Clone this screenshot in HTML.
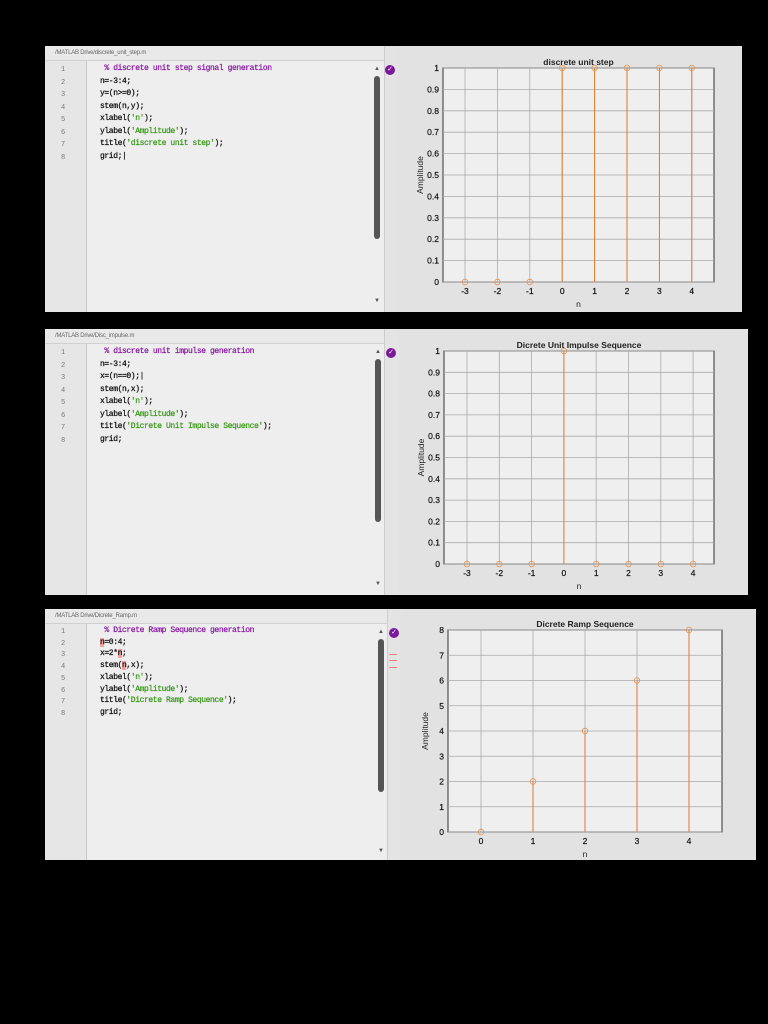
<!DOCTYPE html>
<html><head><meta charset="utf-8"><style>
body{margin:0;background:#000;width:768px;height:1024px;position:relative;overflow:hidden;font-family:"Liberation Sans",sans-serif}
.ed{position:absolute;background:#eeeeee}
.hdr{position:absolute;left:0;right:0;top:0;height:14px;background:#e9e9e9;border-bottom:1px solid #d0d0d0;font-size:6px;color:#666;line-height:14px;padding-left:10px;letter-spacing:-0.2px}
.gut{position:absolute;left:0;width:41px;bottom:0;background:#e6e6e6;border-right:1px solid #c8c8c8}
.ln{position:absolute;left:16px;font-family:"Liberation Mono",monospace;font-size:7px;color:#777}
.code{position:absolute;font-family:"Liberation Mono",monospace;font-size:8px;color:#111;white-space:pre;letter-spacing:-0.4px;-webkit-text-stroke:0.25px currentColor}
.c{color:#8b1aa6}.s{color:#3a9a1a}
.sb{position:absolute;width:6px;background:#555;border-radius:3px}
.strip{position:absolute;background:#e4e4e4;border-left:1px solid #ccc}
.chk{position:absolute;width:10px;height:10px;border-radius:50%;background:#7a1a9a;color:#fff;font-size:7px;line-height:10px;text-align:center}
.pl{position:absolute;background:#e2e2e2}
svg text{font-family:"Liberation Sans",sans-serif}
</style></head><body>

<div class="ed" style="left:45px;top:46px;width:340px;height:266px">
 <div class="hdr">/MATLAB Drive/discrete_unit_step.m</div>
 <div class="gut" style="top:15px"></div>
 <div class="ln" style="top:18px;line-height:12.5px">1<br>2<br>3<br>4<br>5<br>6<br>7<br>8</div>
 <div class="code" style="left:55px;top:17px;line-height:12.5px"> <span class="c">% discrete unit step signal generation</span>
n=-3:4;
y=(n&gt;=0);
stem(n,y);
xlabel(<span class="s">'n'</span>);
ylabel(<span class="s">'Amplitude'</span>);
title(<span class="s">'discrete unit step'</span>);
grid;|</div>
 <div class="sb" style="left:329px;top:30px;height:163px"></div>
 <div style="position:absolute;left:329px;top:20px;font-size:6px;color:#555">▲</div>
 <div style="position:absolute;left:329px;top:252px;font-size:6px;color:#555">▼</div>
</div>
<div class="strip" style="left:384px;top:46px;width:13px;height:266px"></div>
<div class="chk" style="left:385px;top:65px">✓</div>
<div class="pl" style="left:398px;top:46px;width:344px;height:266px"></div>

<div class="ed" style="left:45px;top:329px;width:340px;height:266px">
 <div class="hdr">/MATLAB Drive/Disc_impulse.m</div>
 <div class="gut" style="top:15px"></div>
 <div class="ln" style="top:18px;line-height:12.5px">1<br>2<br>3<br>4<br>5<br>6<br>7<br>8</div>
 <div class="code" style="left:55px;top:17px;line-height:12.5px"> <span class="c">% discrete unit impulse generation</span>
n=-3:4;
x=(n==0);|
stem(n,x);
xlabel(<span class="s">'n'</span>);
ylabel(<span class="s">'Amplitude'</span>);
title(<span class="s">'Dicrete Unit Impulse Sequence'</span>);
grid;</div>
 <div class="sb" style="left:330px;top:30px;height:163px"></div>
 <div style="position:absolute;left:330px;top:20px;font-size:6px;color:#555">▲</div>
 <div style="position:absolute;left:330px;top:252px;font-size:6px;color:#555">▼</div>
</div>
<div class="strip" style="left:384px;top:329px;width:14px;height:266px"></div>
<div class="chk" style="left:386px;top:348px">✓</div>
<div class="pl" style="left:399px;top:329px;width:349px;height:266px"></div>

<div class="ed" style="left:45px;top:609px;width:342px;height:251px">
 <div class="hdr">/MATLAB Drive/Dicrete_Ramp.m</div>
 <div class="gut" style="top:15px"></div>
 <div class="ln" style="top:18px;line-height:11.7px">1<br>2<br>3<br>4<br>5<br>6<br>7<br>8</div>
 <div class="code" style="left:55px;top:16px;line-height:11.7px"> <span class="c">% Dicrete Ramp Sequence generation</span>
<span style="background:#f4a0a0">n</span>=0:4;
x=2*<span style="background:#f4a0a0">n</span>;
stem(<span style="background:#f4a0a0">n</span>,x);
xlabel(<span class="s">'n'</span>);
ylabel(<span class="s">'Amplitude'</span>);
title(<span class="s">'Dicrete Ramp Sequence'</span>);
grid;</div>
 <div class="sb" style="left:333px;top:30px;height:153px"></div>
 <div style="position:absolute;left:333px;top:20px;font-size:6px;color:#555">▲</div>
 <div style="position:absolute;left:333px;top:239px;font-size:6px;color:#555">▼</div>
</div>
<div class="strip" style="left:387px;top:609px;width:13px;height:251px"></div>
<div class="chk" style="left:389px;top:628px">✓</div>
<div style="position:absolute;left:389px;top:654px;width:8px;height:1px;background:#f08080"></div>
<div style="position:absolute;left:389px;top:660px;width:8px;height:1px;background:#f08080"></div>
<div style="position:absolute;left:389px;top:667px;width:8px;height:1px;background:#f08080"></div>
<div class="pl" style="left:401px;top:609px;width:355px;height:251px"></div>

<svg id="sv" width="768" height="1024" style="position:absolute;left:0;top:0"></svg>
<script>
var S=document.getElementById('sv'),h='';
function plot(o){
 var L=o.l,R=o.r,T=o.t,B=o.b;
 h+='<rect x="'+L+'" y="'+T+'" width="'+(R-L)+'" height="'+(B-T)+'" fill="#efefef" stroke="#333" stroke-width="1"/>';
 var ny=o.yt.length;
 for(var i=0;i<ny;i++){var y=B-(B-T)*i/(ny-1);
  h+='<line x1="'+L+'" x2="'+R+'" y1="'+y+'" y2="'+y+'" stroke="#aaa" stroke-width="0.8"/>';
  h+='<text x="'+(L-4)+'" y="'+(y+3)+'" font-size="8.5" text-anchor="end" fill="#111" stroke="#111" stroke-width="0.2">'+o.yt[i]+'</text>';}
 for(var j=0;j<o.xt.length;j++){var x=o.x0+o.dx*j;
  h+='<line x1="'+x+'" x2="'+x+'" y1="'+T+'" y2="'+B+'" stroke="#aaa" stroke-width="0.8"/>';
  h+='<text x="'+x+'" y="'+(B+12)+'" font-size="8.5" text-anchor="middle" fill="#111" stroke="#111" stroke-width="0.2">'+o.xt[j]+'</text>';}
 for(j=0;j<o.v.length;j++){var x=o.x0+o.dx*j,y=B-(B-T)*o.v[j];
  if(y<B)h+='<line x1="'+x+'" x2="'+x+'" y1="'+y+'" y2="'+B+'" stroke="#e07a30" stroke-width="1"/>';
  h+='<circle cx="'+x+'" cy="'+y+'" r="2.8" fill="none" stroke="#e89050" stroke-width="0.8"/>';}
 h+='<text x="'+((L+R)/2)+'" y="'+(T-3)+'" font-size="8.5" font-weight="bold" text-anchor="middle" fill="#222">'+o.title+'</text>';
 h+='<text x="'+((L+R)/2)+'" y="'+(B+25)+'" font-size="8.5" text-anchor="middle" fill="#222">n</text>';
 var yc=(T+B)/2;
 h+='<text x="'+(L-20)+'" y="'+yc+'" font-size="8.5" text-anchor="middle" fill="#222" transform="rotate(-90 '+(L-20)+' '+yc+')">Amplitude</text>';
}
var yt1=['0','0.1','0.2','0.3','0.4','0.5','0.6','0.7','0.8','0.9','1'];
plot({l:443,r:714,t:68,b:282,yt:yt1,xt:['-3','-2','-1','0','1','2','3','4'],x0:465,dx:32.4,v:[0,0,0,1,1,1,1,1],title:'discrete unit step'});
plot({l:444,r:714,t:351,b:564,yt:yt1,xt:['-3','-2','-1','0','1','2','3','4'],x0:467,dx:32.3,v:[0,0,0,1,0,0,0,0],title:'Dicrete Unit Impulse Sequence'});
plot({l:448,r:722,t:630,b:832,yt:['0','1','2','3','4','5','6','7','8'],xt:['0','1','2','3','4'],x0:481,dx:52,v:[0,.25,.5,.75,1],title:'Dicrete Ramp Sequence'});
S.innerHTML=h;
</script>
</body></html>
